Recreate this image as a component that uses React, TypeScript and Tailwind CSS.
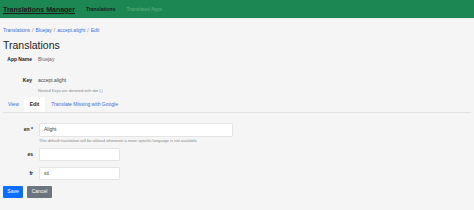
import React from "react";

export default function App() {
  return (
    <div className="w-[474px] h-[210px] bg-[#f5f5f5] overflow-hidden" style={{ fontFamily: '"Liberation Sans", Arial, sans-serif' }}>
      <nav className="h-[19px] bg-[#1d8753] border-b border-[#e9ece9] flex items-center px-[3px] gap-[11px]">
        <span className="text-[7px] font-bold text-[#1a1a1a] underline leading-none">Translations Manager</span>
        <span className="text-[5px] font-bold text-[#1a1a1a] leading-none">Translations</span>
        <span className="text-[5px] text-[#5fae84] leading-none">Translated Apps</span>
      </nav>
      <div className="px-[3px]">
        <div className="pt-[9px] text-[5px] text-[#3a6fd8] leading-none flex gap-[2px]">
          <span>Translations</span><span className="text-[#777]">/</span>
          <span>Bluejay</span><span className="text-[#777]">/</span>
          <span>accept.alight</span><span className="text-[#777]">/</span>
          <span>Edit</span>
        </div>
        <h1 className="mt-[7px] text-[10.5px] leading-none text-[#222]">Translations</h1>
        <div className="mt-[6px] flex items-center text-[5px] leading-none">
          <span className="w-[29px] text-right font-bold text-[#222]">App Name</span>
          <span className="ml-[6px] text-[#666]">Bluejay</span>
        </div>
        <div className="mt-[16px] flex items-center text-[5px] leading-none">
          <span className="w-[29px] text-right font-bold text-[#222]">Key</span>
          <span className="ml-[6px] text-[#444]">accept.alight</span>
        </div>
        <div className="mt-[6px] ml-[35px] text-[4px] leading-none text-[#888]">Nested Keys are denoted with dot (.)</div>
        <div className="mt-[5px] flex items-end border-b border-[#e2e2e2] h-[15px] text-[5px] leading-none">
          <span className="px-[5px] pb-[5px] text-[#3a6fd8]">View</span>
          <span className="px-[6px] pb-[5px] pt-[5px] bg-white font-bold text-[#222]">Edit</span>
          <span className="px-[6px] pb-[5px] text-[#3a6fd8]">Translate Missing with Google</span>
        </div>
        <div className="mt-[10px] flex items-center text-[5px] leading-none">
          <span className="w-[30px] text-right font-bold text-[#222]">en *</span>
          <div className="ml-[6px] w-[194px] h-[14px] bg-white border border-[#e4e4e4] rounded-[1px] flex items-center px-[4px] text-[#444]">Alight</div>
        </div>
        <div className="mt-[2px] ml-[36px] text-[4px] leading-none text-[#888]">This default translation will be utilized whenever a more specific language is not available</div>
        <div className="mt-[5px] flex items-center text-[5px] leading-none">
          <span className="w-[30px] text-right font-bold text-[#222]">es</span>
          <div className="ml-[6px] w-[81px] h-[13px] bg-white border border-[#e4e4e4] rounded-[1px]"></div>
        </div>
        <div className="mt-[6px] flex items-center text-[5px] leading-none">
          <span className="w-[30px] text-right font-bold text-[#222]">fr</span>
          <div className="ml-[6px] w-[81px] h-[13px] bg-white border border-[#e4e4e4] rounded-[1px] flex items-center px-[4px] text-[#444]">sit</div>
        </div>
        <div className="mt-[6px] flex gap-[4px] text-[5px] leading-none">
          <button className="w-[20px] h-[12px] bg-[#0d6efd] text-white rounded-[1px]">Save</button>
          <button className="w-[25px] h-[12px] bg-[#6c757d] text-white rounded-[1px]">Cancel</button>
        </div>
      </div>
    </div>
  );
}
